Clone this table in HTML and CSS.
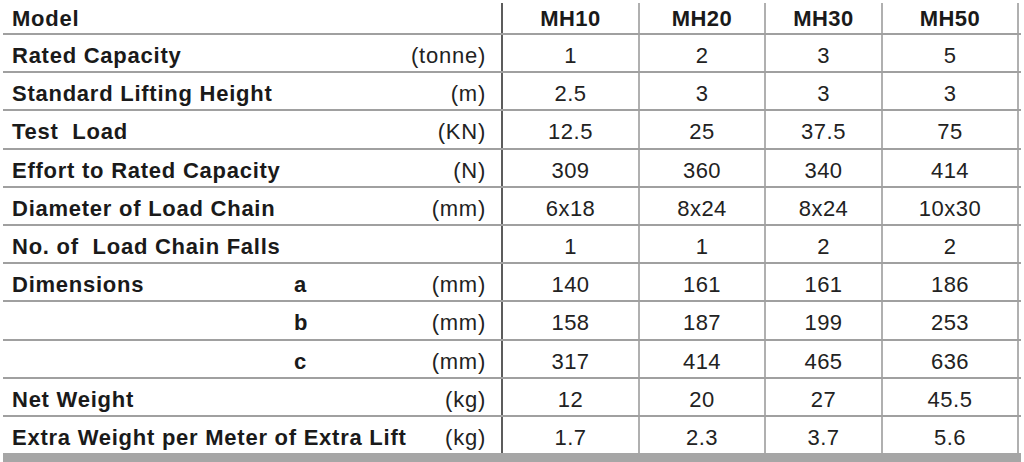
FILE: index.html
```html
<!DOCTYPE html>
<html>
<head>
<meta charset="utf-8">
<link rel="stylesheet" href="styles.css">
</head>
<body>
<div class="sheet">
  <div class="row head">
    <div class="lab"><span class="name">Model</span></div>
    <div class="val first">MH10</div>
    <div class="val">MH20</div>
    <div class="val">MH30</div>
    <div class="val last">MH50</div>
  </div>
  <div class="row">
    <div class="lab"><span class="name">Rated Capacity</span><span class="unit">(tonne)</span></div>
    <div class="val first">1</div><div class="val">2</div><div class="val">3</div><div class="val last">5</div>
  </div>
  <div class="row">
    <div class="lab"><span class="name">Standard Lifting Height</span><span class="unit">(m)</span></div>
    <div class="val first">2.5</div><div class="val">3</div><div class="val">3</div><div class="val last">3</div>
  </div>
  <div class="row">
    <div class="lab"><span class="name">Test&nbsp; Load</span><span class="unit">(KN)</span></div>
    <div class="val first">12.5</div><div class="val">25</div><div class="val">37.5</div><div class="val last">75</div>
  </div>
  <div class="row">
    <div class="lab"><span class="name">Effort to Rated Capacity</span><span class="unit">(N)</span></div>
    <div class="val first">309</div><div class="val">360</div><div class="val">340</div><div class="val last">414</div>
  </div>
  <div class="row">
    <div class="lab"><span class="name">Diameter of Load Chain</span><span class="unit">(mm)</span></div>
    <div class="val first">6x18</div><div class="val">8x24</div><div class="val">8x24</div><div class="val last">10x30</div>
  </div>
  <div class="row">
    <div class="lab"><span class="name">No. of&nbsp; Load Chain Falls</span></div>
    <div class="val first">1</div><div class="val">1</div><div class="val">2</div><div class="val last">2</div>
  </div>
  <div class="row">
    <div class="lab"><span class="name">Dimensions</span><span class="sub">a</span><span class="unit">(mm)</span></div>
    <div class="val first">140</div><div class="val">161</div><div class="val">161</div><div class="val last">186</div>
  </div>
  <div class="row">
    <div class="lab"><span class="sub">b</span><span class="unit">(mm)</span></div>
    <div class="val first">158</div><div class="val">187</div><div class="val">199</div><div class="val last">253</div>
  </div>
  <div class="row">
    <div class="lab"><span class="sub">c</span><span class="unit">(mm)</span></div>
    <div class="val first">317</div><div class="val">414</div><div class="val">465</div><div class="val last">636</div>
  </div>
  <div class="row">
    <div class="lab"><span class="name">Net Weight</span><span class="unit">(kg)</span></div>
    <div class="val first">12</div><div class="val">20</div><div class="val">27</div><div class="val last">45.5</div>
  </div>
  <div class="row end">
    <div class="lab"><span class="name">Extra Weight per Meter of Extra Lift</span><span class="unit">(kg)</span></div>
    <div class="val first">1.7</div><div class="val">2.3</div><div class="val">3.7</div><div class="val last">5.6</div>
  </div>
  <div class="bar"></div>
</div>
</body>
</html>
```
FILE: styles.css
```css
html, body {
  margin: 0;
  padding: 0;
  background: #ffffff;
}
body {
  width: 1024px;
  height: 462px;
  overflow: hidden;
  font-family: "Liberation Sans", Arial, sans-serif;
  color: #1a1a1a;
}
.sheet {
  margin-left: 3px;
  width: 1018px;
}
.row {
  display: grid;
  grid-template-columns: 498px 137px 126px 117px 138px;
  height: 38.2px;
  box-sizing: border-box;
  border-bottom: 2px solid #a0a0a0;
}
.row.head {
  height: 35px;
  padding-top: 3px;
}
.row.end {
  height: 36px;
  border-bottom: none;
}
.lab {
  display: grid;
  grid-template-columns: 282px 1fr auto;
  align-items: center;
  padding: 6px 15px 0 9px;
  font-size: 22px;
  letter-spacing: 0.75px;
  white-space: nowrap;
}
.head .lab {
  padding-top: 2px;
}
.name {
  grid-column: 1 / 3;
  grid-row: 1;
  font-weight: bold;
}
.sub {
  grid-column: 2;
  grid-row: 1;
  font-weight: bold;
}
.unit {
  grid-column: 3;
  grid-row: 1;
  justify-self: end;
  color: #222;
}
.val {
  display: flex;
  align-items: center;
  justify-content: center;
  padding-top: 6px;
  font-size: 22px;
  letter-spacing: 0.5px;
  color: #222;
  border-left: 2px solid #b0b0b0;
}
.val.first {
  border-left: 2px solid #5c5c5c;
}
.val.last {
  border-right: 2px solid #b0b0b0;
}
.head .val {
  font-weight: bold;
  color: #1a1a1a;
  padding-top: 2px;
}
.bar {
  height: 12px;
  background: #a6a6a6;
}
```
